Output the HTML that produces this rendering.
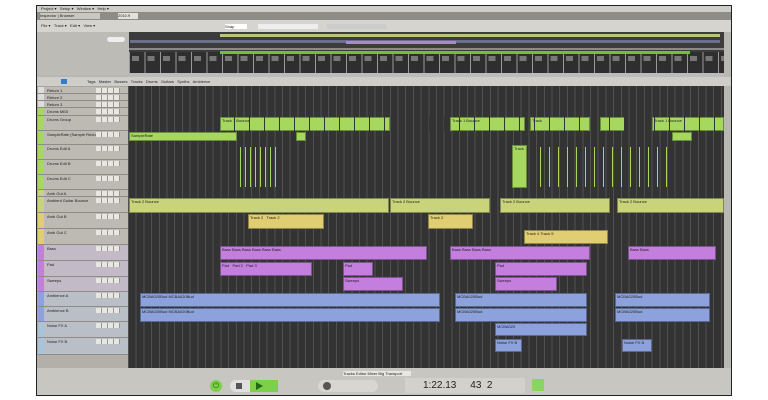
<!DOCTYPE html><html><head><style>
*{margin:0;padding:0;box-sizing:border-box}
body{width:768px;height:400px;background:#fff;position:relative;overflow:hidden;font-family:"Liberation Sans",sans-serif;font-size:4px;color:#222}
div{position:absolute}
.c{border:1px solid rgba(0,0,0,.35);overflow:hidden;white-space:nowrap;padding-left:1px;font-size:4px}
.g{background:#a6d860}.y{background:#c9d47a}.o{background:#e1cd72}.p{background:#c47ede}.b{background:#8da2dc}
.tr{left:38px;width:90px;background:#bdbab3;border-bottom:1px solid #8f8c85;font-size:4px;padding:1px 0 0 9px}
.tr i{position:absolute;left:0;top:0;bottom:0;width:6px}
.btn{position:absolute;right:8px;top:1px;width:24px;height:5px;background:repeating-linear-gradient(90deg,#e8e6e0 0 5px,#9a978f 5px 6px)}
</style></head><body>
<div style="left:36px;top:5px;width:696px;height:391px;background:#b9b7b2;border:1px solid #222"></div>
<div style="left:37px;top:6px;width:694px;height:6px;background:#cfcdc8;font-size:4px;padding-left:4px">Project ▾ &nbsp; Setup ▾ &nbsp; Window ▾ &nbsp; Help ▾</div>
<div style="left:37px;top:12px;width:694px;height:8px;background:#8e8c88"></div>
<div style="left:40px;top:13px;width:60px;height:6px;background:#c9c7c2;font-size:4px">Inspector | Browser</div>
<div style="left:118px;top:13px;width:20px;height:6px;background:#e3e1dc;font-size:4px">2010.9</div>
<div style="left:37px;top:20px;width:694px;height:12px;background:#d6d4cf;padding:3px 4px;font-size:4px">File ▾ &nbsp; Track ▾ &nbsp; Edit ▾ &nbsp; View ▾</div>
<div style="left:225px;top:24px;width:22px;height:5px;background:#fff;font-size:4px">Snap</div>
<div style="left:258px;top:24px;width:60px;height:5px;background:#eee"></div>
<div style="left:327px;top:24px;width:60px;height:5px;background:#ccc"></div>
<div style="left:37px;top:32px;width:92px;height:43px;background:#bdbbb6"></div>
<div style="left:107px;top:37px;width:18px;height:5px;background:#eee;border-radius:3px"></div>
<div style="left:129px;top:32px;width:595px;height:20px;background:#3c3c3c"></div>
<div style="left:220px;top:34px;width:500px;height:3px;background:#b8c67a"></div>
<div style="left:130px;top:40px;width:590px;height:3px;background:#6a6f8c"></div>
<div style="left:346px;top:41px;width:110px;height:3px;background:#a88ad0"></div>
<div style="left:129px;top:48px;width:595px;height:2px;background:#8a8a8a"></div>
<div style="left:129px;top:52px;width:595px;height:21px;background:#2e2e2e repeating-linear-gradient(90deg,#999 0 1px,transparent 1px 15.5px)"></div>
<div style="left:129px;top:56px;width:595px;height:5px;background:repeating-linear-gradient(90deg,transparent 0 3px,#777 3px 10px,transparent 10px 15.5px)"></div>
<div style="left:220px;top:51px;width:470px;height:3px;background:#6dc23a"></div>
<div style="left:129px;top:73px;width:595px;height:4px;background:#bbb"></div>
<div style="left:37px;top:77px;width:694px;height:9px;background:#cfcdc8;font-size:4px;padding:2px 0 0 50px">Tags &nbsp; Master &nbsp; Busses &nbsp; Tracks &nbsp; Drums &nbsp; Guitars &nbsp; Synths &nbsp; Ambience</div>
<div style="left:61px;top:79px;width:6px;height:5px;background:#2f7fd0"></div>
<div style="left:128px;top:86px;width:596px;height:282px;background:#333 repeating-linear-gradient(90deg,#505050 0 1px,transparent 1px 7.7px)"></div>
<div style="left:37px;top:86px;width:91px;height:282px;background:#a9a6a0"></div>
<div style="left:37px;top:355px;width:91px;height:13px;background:#b3b0aa"></div>
<div class="tr" style="top:87px;height:7px"><i style="background:#ddd"></i>Return 1<span class="btn"></span></div>
<div class="tr" style="top:94px;height:7px"><i style="background:#ddd"></i>Return 2<span class="btn"></span></div>
<div class="tr" style="top:101px;height:7px"><i style="background:#ddd"></i>Return 3<span class="btn"></span></div>
<div class="tr" style="top:108px;height:8px"><i style="background:#a6d860"></i>Drums MIDI<span class="btn"></span></div>
<div class="tr" style="top:116px;height:15px"><i style="background:#a6d860"></i>Drums Group<span class="btn"></span></div>
<div class="tr" style="top:131px;height:14px"><i style="background:#a6d860"></i>SampleRate (Sample Redux)<span class="btn"></span></div>
<div class="tr" style="top:145px;height:15px"><i style="background:#a6d860"></i>Drums Edit A<span class="btn"></span></div>
<div class="tr" style="top:160px;height:15px"><i style="background:#a6d860"></i>Drums Edit B<span class="btn"></span></div>
<div class="tr" style="top:175px;height:15px"><i style="background:#a6d860"></i>Drums Edit C<span class="btn"></span></div>
<div class="tr" style="top:190px;height:7px"><i style="background:#c9d47a"></i>Amb Gut A<span class="btn"></span></div>
<div class="tr" style="top:197px;height:16px"><i style="background:#c9d47a"></i>Ambient Guitar Bounce<span class="btn"></span></div>
<div class="tr" style="top:213px;height:16px"><i style="background:#e1cd72"></i>Amb Gut B<span class="btn"></span></div>
<div class="tr" style="top:229px;height:16px"><i style="background:#e1cd72"></i>Amb Gut C<span class="btn"></span></div>
<div class="tr" style="top:245px;height:16px;background:#c2bac6"><i style="background:#c47ede"></i>Bass<span class="btn"></span></div>
<div class="tr" style="top:261px;height:16px;background:#c2bac6"><i style="background:#c47ede"></i>Pad<span class="btn"></span></div>
<div class="tr" style="top:277px;height:15px;background:#c2bac6"><i style="background:#c47ede"></i>Sweeps<span class="btn"></span></div>
<div class="tr" style="top:292px;height:15px;background:#babec6"><i style="background:#8da2dc"></i>Ambience A<span class="btn"></span></div>
<div class="tr" style="top:307px;height:15px;background:#babec6"><i style="background:#8da2dc"></i>Ambience B<span class="btn"></span></div>
<div class="tr" style="top:322px;height:16px;background:#babec6"><i style="background:#a8c4dc"></i>Noise FX A<span class="btn"></span></div>
<div class="tr" style="top:338px;height:17px;background:#babec6"><i style="background:#a8c4dc"></i>Noise FX B<span class="btn"></span></div>
<div class="c g" style="left:220px;top:117px;width:170px;height:14px">Track 1 Bounce</div>
<div class="c g" style="left:450px;top:117px;width:75px;height:14px">Track 1 Bounce</div>
<div class="c g" style="left:530px;top:117px;width:60px;height:14px">Track</div>
<div class="c g" style="left:600px;top:117px;width:25px;height:14px"></div>
<div class="c g" style="left:652px;top:117px;width:72px;height:14px">Track 1 Bounce</div>
<div style="left:220px;top:117px;width:504px;height:14px;background:repeating-linear-gradient(90deg,transparent 0 14px,#333 14px 15px)"></div>
<div class="c g" style="left:129px;top:132px;width:108px;height:9px">SampleRate</div>
<div class="c g" style="left:296px;top:132px;width:10px;height:9px"></div>
<div class="c g" style="left:672px;top:132px;width:20px;height:9px"></div>
<div class="c g" style="left:512px;top:145px;width:15px;height:43px">Track 1</div>
<div style="left:240px;top:147px;width:40px;height:40px;background:repeating-linear-gradient(90deg,#a6d860 0 1px,transparent 1px 5px)"></div>
<div style="left:540px;top:147px;width:130px;height:40px;background:repeating-linear-gradient(90deg,#a6d860 0 1px,transparent 1px 9px)"></div>
<div class="c y" style="left:129px;top:198px;width:260px;height:15px">Track 2 Bounce</div>
<div class="c y" style="left:390px;top:198px;width:100px;height:15px">Track 2 Bounce</div>
<div class="c y" style="left:500px;top:198px;width:110px;height:15px">Track 2 Bounce</div>
<div class="c y" style="left:617px;top:198px;width:107px;height:15px">Track 2 Bounce</div>
<div class="c o" style="left:248px;top:214px;width:76px;height:15px">Track 2 &nbsp; Track 2</div>
<div class="c o" style="left:428px;top:214px;width:45px;height:15px">Track 2</div>
<div class="c o" style="left:524px;top:230px;width:84px;height:14px">Track 4 Track 5</div>
<div class="c p" style="left:220px;top:246px;width:207px;height:14px">Bass Bass Bass Bass Bass Bass</div>
<div class="c p" style="left:450px;top:246px;width:140px;height:14px">Bass Bass Bass Bass</div>
<div class="c p" style="left:628px;top:246px;width:88px;height:14px">Bass Bass</div>
<div class="c p" style="left:220px;top:262px;width:92px;height:14px">Pad &nbsp; Pad 2 &nbsp; Pad 3</div>
<div class="c p" style="left:343px;top:262px;width:30px;height:14px">Pad</div>
<div class="c p" style="left:495px;top:262px;width:92px;height:14px">Pad</div>
<div class="c p" style="left:343px;top:277px;width:60px;height:14px">Sweeps</div>
<div class="c p" style="left:495px;top:277px;width:62px;height:14px">Sweeps</div>
<div class="c b" style="left:140px;top:293px;width:300px;height:14px">MCBA020Bud MCBA020Bud</div>
<div class="c b" style="left:455px;top:293px;width:132px;height:14px">MCBA020Bud</div>
<div class="c b" style="left:615px;top:293px;width:95px;height:14px">MCBA020Bud</div>
<div class="c b" style="left:140px;top:308px;width:300px;height:14px">MCBA020Bud MCBA020Bud</div>
<div class="c b" style="left:455px;top:308px;width:132px;height:14px">MCBA020Bud</div>
<div class="c b" style="left:615px;top:308px;width:95px;height:14px">MCBA020Bud</div>
<div class="c b" style="left:495px;top:323px;width:92px;height:13px">MCBA020</div>
<div class="c b" style="left:495px;top:339px;width:27px;height:13px">Noise FX B</div>
<div class="c b" style="left:622px;top:339px;width:30px;height:13px">Noise FX B</div>
<div style="left:37px;top:368px;width:694px;height:27px;background:#c8c6c1"></div>
<div style="left:343px;top:371px;width:68px;height:5px;background:#e9e7e2;font-size:4px">Tracks Editor Mixer Big Transport</div>
<div style="left:210px;top:380px;width:12px;height:12px;border-radius:50%;background:#7ed04a;color:#1a6a10;font-size:8px;text-align:center;line-height:12px">⏻</div>
<div style="left:230px;top:380px;width:20px;height:12px;background:#e0e0e0;border-radius:6px 0 0 6px"></div>
<div style="left:236px;top:383px;width:6px;height:6px;background:#555"></div>
<div style="left:250px;top:380px;width:28px;height:12px;background:#7ed04a"></div>
<div style="left:256px;top:382px;width:0;height:0;border-left:7px solid #1f6a12;border-top:4px solid transparent;border-bottom:4px solid transparent"></div>
<div style="left:318px;top:380px;width:60px;height:12px;background:#d8d6d1;border-radius:6px"></div>
<div style="left:323px;top:382px;width:8px;height:8px;border-radius:50%;background:#555"></div>
<div style="left:405px;top:378px;width:120px;height:15px;background:#d3d1cc;font-size:10px;padding:2px 0 0 18px;color:#222">1:22.13 &nbsp; &nbsp; 43 &nbsp;2</div>
<div style="left:532px;top:379px;width:12px;height:12px;background:#8ad460"></div>
</body></html>
